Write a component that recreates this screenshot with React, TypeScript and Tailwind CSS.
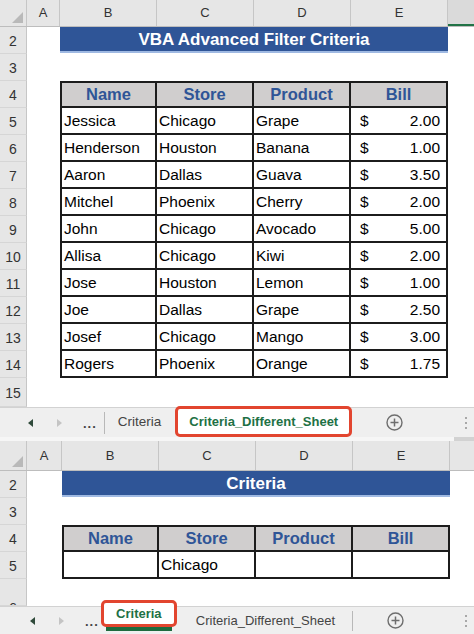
import clsx from "clsx";

type Row =
  | { n: number; kind: "blank"; h?: string }
  | { n: number; kind: "title"; text: string }
  | { n: number; kind: "head"; cells: string[] }
  | { n: number; kind: "data"; cells: string[] };

const HEAD = ["Name", "Store", "Product", "Bill"];

const DATA = [
  ["Jessica", "Chicago", "Grape", "2.00"],
  ["Henderson", "Houston", "Banana", "1.00"],
  ["Aaron", "Dallas", "Guava", "3.50"],
  ["Mitchel", "Phoenix", "Cherry", "2.00"],
  ["John", "Chicago", "Avocado", "5.00"],
  ["Allisa", "Chicago", "Kiwi", "2.00"],
  ["Jose", "Houston", "Lemon", "1.00"],
  ["Joe", "Dallas", "Grape", "2.50"],
  ["Josef", "Chicago", "Mango", "3.00"],
  ["Rogers", "Phoenix", "Orange", "1.75"],
];

function RowNum({ n, cut }: { n: number; cut?: boolean }) {
  return (
    <div
      className={clsx(
        "w-[27px] shrink-0 h-full bg-[#e6e6e6] border-r border-r-[#c6c6c6] border-b border-b-[#d6d6d6] flex justify-center text-[14px] text-[#333] overflow-hidden",
        cut ? "items-start pt-[19px]" : "items-center pt-[2px]"
      )}
    >
      {n}
    </div>
  );
}

function ColHeader({ aw, green }: { aw: string; green?: boolean }) {
  const letters = ["B", "C", "D", "E"];
  return (
    <div className="flex h-full bg-[#e6e6e6] border-b border-[#bdbdbd] text-[13px] text-[#333]">
      <div className="w-[27px] shrink-0 h-full border-r border-[#c6c6c6] relative">
        <svg className="absolute right-[3px] bottom-[3px]" width="11" height="11" viewBox="0 0 11 11">
          <polygon points="11,0 11,11 0,11" fill="#b9b9b9" />
        </svg>
      </div>
      <div className={clsx(aw, "shrink-0 h-full border-r border-[#c6c6c6] flex items-center justify-center")}>A</div>
      {letters.map((l) => (
        <div key={l} className="w-[97px] shrink-0 h-full border-r border-[#c6c6c6] flex items-center justify-center">
          {l}
        </div>
      ))}
      <div className={clsx("flex-1 h-full", green && "bg-[#dadada] border-b-2 border-[#217346]")} />
    </div>
  );
}

function TableCells({ cells, head }: { cells: string[]; head?: boolean }) {
  return (
    <div className="flex h-full">
      {cells.map((c, i) => (
        <div
          key={i}
          className={clsx(
            "w-[97px] shrink-0 h-full border-r-2 border-b-2 border-[#1c1c1c] flex items-center",
            i === 0 && "border-l-2",
            head
              ? "border-t-2 bg-[#d0cece] justify-center text-[16.5px] font-bold text-[#2f5597]"
              : "bg-white text-[15.5px] text-black",
            !head && i < 3 && "pl-[2px] pt-[1px]",
            !head && i === 3 && "justify-between pl-[9px] pr-[6px] pt-[1px]"
          )}
        >
          {!head && i === 3 && c ? (
            <>
              <span>$</span>
              <span>{c}</span>
            </>
          ) : (
            c
          )}
        </div>
      ))}
    </div>
  );
}

function SheetRow({ row, aw, h }: { row: Row; aw: string; h: string }) {
  return (
    <div className={clsx("flex", h)}>
      <RowNum n={row.n} cut={row.kind === "blank" && row.h === "cut"} />
      <div className={clsx(aw, "shrink-0")} />
      {row.kind === "title" && (
        <div className="w-[388px] shrink-0 h-full flex flex-col">
          <div className="h-[24px] bg-[#2f5597] flex items-center justify-center text-white font-bold text-[17px] pt-[1px]">
            {row.text}
          </div>
          <div className="h-[2px] bg-[#9fb9e2]" />
        </div>
      )}
      {row.kind === "head" && <TableCells cells={row.cells} head />}
      {row.kind === "data" && <TableCells cells={row.cells} />}
      <div className="flex-1" />
    </div>
  );
}

function LeftArrows({ first }: { first: string }) {
  return (
    <>
      <svg className={first} width="5" height="8" viewBox="0 0 5 8">
        <polygon points="5,0 5,8 0,4" fill="#2f4a3a" />
      </svg>
      <svg className="ml-[24px]" width="5" height="8" viewBox="0 0 5 8">
        <polygon points="0,0 0,8 5,4" fill="#c4c4c4" />
      </svg>
    </>
  );
}

function PlusCircle({ ml }: { ml: string }) {
  return (
    <svg className={ml} width="17" height="17" viewBox="0 0 17 17">
      <circle cx="8.5" cy="8.5" r="7.5" fill="none" stroke="#6e6e6e" strokeWidth="1.4" />
      <path d="M8.5 4.5v8M4.5 8.5h8" stroke="#6e6e6e" strokeWidth="1.5" />
    </svg>
  );
}

function Dots() {
  return (
    <div className="ml-auto mr-[7px] flex flex-col gap-[3px]">
      <div className="w-[2px] h-[2px] bg-[#a8a8a8]" />
      <div className="w-[2px] h-[2px] bg-[#a8a8a8]" />
      <div className="w-[2px] h-[2px] bg-[#a8a8a8]" />
    </div>
  );
}

function TopTabs() {
  return (
    <div className="flex flex-col">
      <div className="h-[30px] bg-[#efefef] border-t border-[#d2d2d2] flex items-center text-[13px] text-[#444]">
        <LeftArrows first="ml-[28px]" />
        <span className="ml-[21px] font-bold tracking-[1px] leading-none pt-[2px]">...</span>
        <div className="ml-[7px] w-px h-[22px] bg-[#b8b8b8]" />
        <span className="ml-[13px] text-[13.5px]">Criteria</span>
        <div className="ml-[14px] self-start -mt-[2px] h-[31px] px-[11px] border-[3px] border-[#e2452f] rounded-[5px] bg-white flex items-center font-bold text-[#1e7145]">
          Criteria_Different_Sheet
        </div>
        <PlusCircle ml="ml-[34px]" />
        <Dots />
      </div>
      <div className="h-[4px] bg-[#f6f6f6] flex justify-end">
        <div className="w-[20px] bg-[#d2d2d2]" />
      </div>
    </div>
  );
}

function BottomTabs() {
  return (
    <div className="h-[28px] bg-[#efefef] border-t border-[#d2d2d2] flex items-center text-[13px] text-[#444]">
      <LeftArrows first="ml-[30px]" />
      <span className="ml-[21px] font-bold tracking-[1px] leading-none pt-[2px]">...</span>
      <div className="ml-[2px] self-start -mt-[7px] flex flex-col">
        <div className="h-[27px] w-[76px] border-[3px] border-[#e2452f] rounded-[5px] bg-white flex items-center justify-center font-bold text-[#1e7145]">
          Criteria
        </div>
        <div className="h-[4px] mx-[5px] bg-[#1d6b3e]" />
      </div>
      <span className="ml-[19px]">Criteria_Different_Sheet</span>
      <div className="ml-[17px] w-px h-[20px] bg-[#b8b8b8]" />
      <PlusCircle ml="ml-[34px]" />
      <Dots />
    </div>
  );
}

const TOP_ROWS: Row[] = [
  { n: 2, kind: "title", text: "VBA Advanced Filter Criteria" },
  { n: 3, kind: "blank" },
  { n: 4, kind: "head", cells: HEAD },
  ...DATA.map((cells, i): Row => ({ n: 5 + i, kind: "data", cells })),
];

const BOTTOM_ROWS: Row[] = [
  { n: 2, kind: "title", text: "Criteria" },
  { n: 3, kind: "blank" },
  { n: 4, kind: "head", cells: HEAD },
  { n: 5, kind: "data", cells: ["", "Chicago", "", ""] },
];

export default function App() {
  return (
    <div className="w-[474px] h-[634px] overflow-hidden bg-white font-['Liberation_Sans',Arial,sans-serif]">
      {/* first sheet */}
      <div className="h-[27px]">
        <ColHeader aw="w-[33px]" green />
      </div>
      {TOP_ROWS.map((r) => (
        <SheetRow key={r.n} row={r} aw="w-[33px]" h="h-[27px]" />
      ))}
      <SheetRow row={{ n: 15, kind: "blank" }} aw="w-[33px]" h="h-[29px]" />
      <TopTabs />

      {/* second sheet */}
      <div className="h-[30px]">
        <ColHeader aw="w-[35px]" />
      </div>
      {BOTTOM_ROWS.map((r) => (
        <SheetRow key={r.n} row={r} aw="w-[35px]" h="h-[27px]" />
      ))}
      <SheetRow row={{ n: 6, kind: "blank", h: "cut" }} aw="w-[35px]" h="h-[27px]" />
      <BottomTabs />
    </div>
  );
}
